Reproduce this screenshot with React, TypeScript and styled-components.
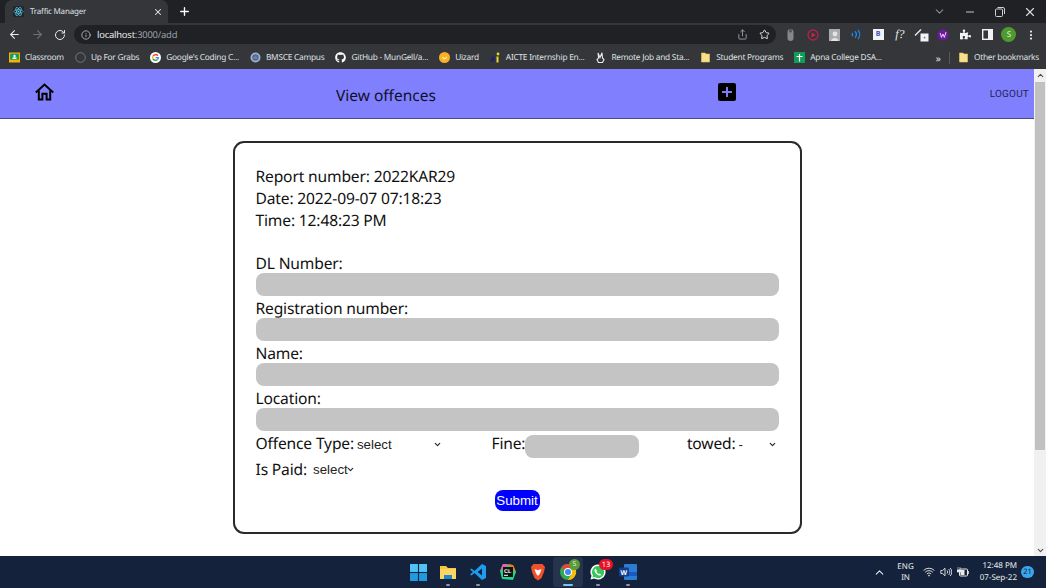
import { createGlobalStyle, styled } from 'styled-components';
import { FaGithub, FaPuzzlePiece } from 'react-icons/fa';
import { ArrowLeft, ArrowRight, ChevronDown, ChevronUp, Info, Minus, MoreVertical, Plus, RotateCw, Share, Star, X } from 'lucide-react';

const GlobalStyle = createGlobalStyle`
  html, body {
    margin: 0;
    height: 100%;
    overflow: hidden;
    background: #fff;
    font-family: 'Noto Sans', sans-serif;
  }
`;

const BOOKMARKS_LEFT = [
  { label: 'Classroom', icon: <ClassroomIcon /> },
  { label: 'Up For Grabs', icon: <RingIcon /> },
  { label: "Google's Coding C...", icon: <GoogleIcon /> },
  { label: 'BMSCE Campus', icon: <CampusIcon /> },
  { label: 'GitHub - MunGell/a...', icon: <FaGithub size={11} color="#fff" /> },
  { label: 'Uizard', icon: <UizardIcon /> },
  { label: 'AICTE Internship En...', icon: <AicteIcon /> },
  { label: 'Remote Job and Sta...', icon: <PeaceIcon /> },
  { label: 'Student Programs', icon: <FolderIcon /> },
  { label: 'Apna College DSA...', icon: <ApnaIcon /> },
];

function ClassroomIcon() {
  return (
    <svg width="11" height="11" viewBox="0 0 11 11">
      <rect width="11" height="10" y="0.5" fill="#f4b400" />
      <rect x="1.2" y="1.7" width="8.6" height="6" fill="#0f9d58" />
      <circle cx="5.5" cy="4" r="1.2" fill="#fff" />
      <rect x="3.5" y="5.4" width="4" height="1.6" fill="#fff" />
    </svg>
  );
}

function RingIcon() {
  return (
    <svg width="11" height="11" viewBox="0 0 11 11">
      <circle cx="5.5" cy="5.5" r="4.8" fill="none" stroke="#6f7a80" />
    </svg>
  );
}

function GoogleIcon() {
  return (
    <svg width="11" height="11" viewBox="0 0 11 11">
      <circle cx="5.5" cy="5.5" r="5.5" fill="#fff" />
      <path d="M8.4 3.3A3.6 3.6 0 0 0 2.4 3.7L3.6 4.6A2.2 2.2 0 0 1 7.3 4.2Z" fill="#ea4335" />
      <path d="M2.4 3.7A3.6 3.6 0 0 0 2.4 7.3L3.6 6.4A2.2 2.2 0 0 1 3.6 4.6Z" fill="#fbbc05" />
      <path d="M2.4 7.3A3.6 3.6 0 0 0 8 8L7 7A2.2 2.2 0 0 1 3.6 6.4Z" fill="#34a853" />
      <path d="M9 5H5.6V6.2H7.6A1.8 1.8 0 0 1 7 7L8 8A3.6 3.6 0 0 0 9 5Z" fill="#4285f4" />
    </svg>
  );
}

function CampusIcon() {
  return (
    <svg width="11" height="11" viewBox="0 0 11 11">
      <circle cx="5.5" cy="5.5" r="5" fill="#9fb2c4" />
      <circle cx="5.5" cy="5.5" r="3.2" fill="#3d6fb4" />
      <path d="M3 6.5 5.5 4 8 6.5Z" fill="#d0704a" />
    </svg>
  );
}

function UizardIcon() {
  return (
    <svg width="11" height="11" viewBox="0 0 11 11">
      <circle cx="5.5" cy="5.5" r="5.5" fill="#fbb124" />
      <path d="M3.7 5A1.8 1.8 0 0 0 7.3 5" fill="none" stroke="#fff" strokeWidth="1" />
    </svg>
  );
}

function AicteIcon() {
  return (
    <svg width="11" height="11" viewBox="0 0 11 11">
      <path d="M0 10 2.5 4.5H4L4.6 10H3.6L3.4 8.6H2L1.2 10Z" fill="#1c1c7a" />
      <rect x="6.5" y="4.5" width="2" height="6" fill="#e8d820" />
      <circle cx="8" cy="2" r="1.4" fill="#e8d820" />
    </svg>
  );
}

function PeaceIcon() {
  return (
    <svg width="11" height="11" viewBox="0 0 11 11">
      <path d="M3 1 5 5.5 7 .8 7.5 6 9 7.5 7.5 10.5H3.5L2 7.5 3.6 6Z" fill="none" stroke="#e8e8e8" strokeWidth="1.1" />
    </svg>
  );
}

function FolderIcon() {
  return (
    <svg width="11" height="11" viewBox="0 0 11 11">
      <path d="M1.5 1H5L6 2H9.5V10H1.5Z" fill="#f9df8c" stroke="#e8c95f" strokeWidth=".6" />
    </svg>
  );
}

function ApnaIcon() {
  return (
    <svg width="11" height="11" viewBox="0 0 11 11">
      <rect width="11" height="11" fill="#0f9d58" />
      <path d="M5.5 2V9.5M2.5 4.5H8.5" stroke="#fff" strokeWidth="1.2" />
    </svg>
  );
}

function WindowsLogo() {
  return (
    <svg width="17" height="17" viewBox="0 0 18 18">
      <rect width="8.4" height="8.4" fill="#4fc3f7" />
      <rect x="9.6" width="8.4" height="8.4" fill="#4fc3f7" />
      <rect y="9.6" width="8.4" height="8.4" fill="#1e9be0" />
      <rect x="9.6" y="9.6" width="8.4" height="8.4" fill="#1e9be0" />
    </svg>
  );
}

function FilesIcon() {
  return (
    <svg width="18" height="18" viewBox="0 0 18 18">
      <path d="M1 3H7L9 5H17V16H1Z" fill="#fcc63c" />
      <rect x="1" y="6" width="16" height="10" fill="#fbd566" />
      <rect x="5" y="12" width="8" height="4" fill="#1e88c9" />
    </svg>
  );
}

function VsCodeIcon() {
  return (
    <svg width="18" height="18" viewBox="0 0 18 18">
      <path d="M13 1 17 3V15L13 17 5.5 10 2.5 12.5 1 11.5 4 9 1 6.5 2.5 5.5 5.5 8ZM13 5.5 8.5 9 13 12.5Z" fill="#1f9cf0" />
    </svg>
  );
}

function ClionIcon() {
  return (
    <svg width="18" height="18" viewBox="0 0 18 18">
      <path d="M4 1 14 2 17 9 14 17 3 16 1 8Z" fill="#21d789" />
      <path d="M9 1 14 2 17 9 11 5Z" fill="#f97a12" />
      <path d="M4 1 9 1 5 6 1 8Z" fill="#ef5fa7" />
      <rect x="4" y="4" width="10" height="10" fill="#111" />
      <text x="5" y="10" fontSize="5.5" fontWeight="700" fontFamily="Liberation Sans" fill="#fff">CL</text>
      <rect x="5" y="11.8" width="4" height="1" fill="#fff" />
    </svg>
  );
}

function BraveIcon() {
  return (
    <svg width="18" height="18" viewBox="0 0 18 18">
      <path d="M4.5 1H13.5L16 4 15 9 12.5 15 9 17.5 5.5 15 3 9 2 4Z" fill="#f0512b" />
      <path d="M5.5 6 9 7.2 12.5 6 11 10.5 9 13 7 10.5Z" fill="#fff" />
    </svg>
  );
}

function ChromeIcon() {
  return (
    <svg width="18" height="18" viewBox="0 0 18 18">
      <circle cx="9" cy="9" r="8" fill="#34a853" />
      <path d="M9 1A8 8 0 0 1 16 5H9A4 4 0 0 0 5.5 7L2.5 4.2A8 8 0 0 1 9 1Z" fill="#ea4335" />
      <path d="M16 5A8 8 0 0 1 9 17L12.5 11 12.6 7Z" fill="#fbbc05" />
      <circle cx="9" cy="9" r="4" fill="#fff" />
      <circle cx="9" cy="9" r="3" fill="#4285f4" />
    </svg>
  );
}

function WhatsappIcon() {
  return (
    <svg width="18" height="18" viewBox="0 0 18 18">
      <path d="M9 1.5A7.5 7.5 0 0 0 2.5 12.8L1.5 16.5 5.3 15.5A7.5 7.5 0 1 0 9 1.5Z" fill="#fff" />
      <path d="M9 3A6 6 0 0 0 4 12.3L3.4 14.6 5.8 14A6 6 0 1 0 9 3Z" fill="#35c759" />
      <path d="M6.5 5.5 8 8 7.4 9 9.4 11 10.4 10.4 12.6 12C11 13.6 5 11 5.6 6.4Z" fill="#fff" />
    </svg>
  );
}

function WordIcon() {
  return (
    <svg width="18" height="18" viewBox="0 0 18 18">
      <rect x="5" y="1" width="13" height="16" rx="1" fill="#2b7cd3" />
      <rect x="5" y="9" width="13" height="4" fill="#185abd" />
      <rect y="4.5" width="10" height="9" rx="1" fill="#103f91" />
      <text x="1.5" y="11.5" fontSize="7" fontWeight="700" fontFamily="Liberation Sans" fill="#fff">W</text>
    </svg>
  );
}

function ReactFavicon() {
  return (
    <svg width="11" height="11" viewBox="0 0 11 11" fill="none" stroke="#61dafb" strokeWidth=".6">
      <rect width="11" height="11" rx="1.5" fill="#20272b" stroke="none" />
      <ellipse cx="5.5" cy="5.5" rx="4.6" ry="1.8" />
      <ellipse cx="5.5" cy="5.5" rx="4.6" ry="1.8" transform="rotate(60 5.5 5.5)" />
      <ellipse cx="5.5" cy="5.5" rx="4.6" ry="1.8" transform="rotate(120 5.5 5.5)" />
      <circle cx="5.5" cy="5.5" r=".8" fill="#61dafb" stroke="none" />
    </svg>
  );
}

function HomeIcon() {
  return (
    <svg width="19" height="18" viewBox="0 0 19 18" fill="none" stroke="#000" strokeWidth="2">
      <path d="M.8 9.6 9.5 1.6 18.2 9.6" />
      <path d="M3.8 7.6V16.6H7.4V10.8H11.6V16.6H15.2V7.6" />
    </svg>
  );
}

function AddSquareIcon() {
  return (
    <svg width="18" height="18" viewBox="0 0 18 18">
      <rect width="18" height="18" rx="2" fill="#000" />
      <path d="M9 4V14M4 9H14" stroke="#7c7cf5" strokeWidth="2" />
    </svg>
  );
}

function MicExtIcon() {
  return (
    <svg width="11" height="14" viewBox="0 0 11 14">
      <rect x="2.5" y="1" width="6" height="12" rx="3" fill="#85888b" />
      <rect x="3.8" y="1" width="3.4" height="3.5" rx="1.5" fill="#55575a" />
    </svg>
  );
}

function PlayExtIcon() {
  return (
    <svg width="12" height="12" viewBox="0 0 12 12">
      <circle cx="6" cy="6" r="5" fill="none" stroke="#b3224b" strokeWidth="1.3" />
      <path d="M4.6 3.4 8.6 6 4.6 8.6Z" fill="#c8264f" />
    </svg>
  );
}

function PhotoExtIcon() {
  return (
    <svg width="11" height="12" viewBox="0 0 11 12">
      <rect width="11" height="12" fill="#a9abad" />
      <circle cx="6" cy="5" r="2.4" fill="#e4e4e4" />
      <path d="M2 12C2.5 8 9 8 9.5 12Z" fill="#e4e4e4" />
    </svg>
  );
}

function SignalExtIcon() {
  return (
    <svg width="10" height="11" viewBox="0 0 10 11" fill="none" stroke="#1e88e5" strokeWidth="1.3">
      <path d="M1 3.8A3 3 0 0 1 1 7.2M4 2.2A5 5 0 0 1 4 8.8M7 .8A7.5 7.5 0 0 1 7 10.2" />
    </svg>
  );
}

function PencilExtIcon() {
  return (
    <svg width="15" height="15" viewBox="0 0 15 15">
      <path d="M1 8.5 7 2.5" stroke="#e8eaed" strokeWidth="1.5" />
      <rect x="6.5" y="6.5" width="8" height="8" fill="#f1f3f4" />
      <rect x="9.8" y="9.8" width="1.6" height="1.6" fill="#70757a" />
    </svg>
  );
}

function WriterExtIcon() {
  return (
    <svg width="12" height="12" viewBox="0 0 12 12">
      <circle cx="6" cy="6" r="5.6" fill="#6a1b9a" />
      <path d="M3.2 4 4.5 8.4 6 5 7.4 8.4 9 3" fill="none" stroke="#f3e5f5" strokeWidth=".9" />
    </svg>
  );
}

function RestoreGlyph() {
  return (
    <svg width="10" height="10" viewBox="0 0 10 10" fill="none" stroke="#d0d0d0">
      <rect x=".5" y="2" width="7" height="7.5" rx="1" />
      <path d="M2.5 .5H8A1.5 1.5 0 0 1 9.5 2V7" />
    </svg>
  );
}

function SidePanelGlyph() {
  return (
    <svg width="11" height="11" viewBox="0 0 11 11">
      <rect x=".7" y=".7" width="9.6" height="9.6" fill="none" stroke="#f1f3f4" strokeWidth="1.4" />
      <rect x="6" y="1" width="4" height="9" fill="#f1f3f4" />
    </svg>
  );
}

function WifiGlyph() {
  return (
    <svg width="12" height="10" viewBox="0 0 12 10" fill="none" stroke="#e8e8e8" strokeWidth=".9">
      <path d="M.6 3.4A7.8 7.8 0 0 1 11.4 3.4M2.2 5.2A5.4 5.4 0 0 1 9.8 5.2M3.9 6.9A3 3 0 0 1 8.1 6.9" />
      <circle cx="6" cy="8.6" r=".8" fill="#e8e8e8" stroke="none" />
    </svg>
  );
}

function SpeakerGlyph() {
  return (
    <svg width="12" height="10" viewBox="0 0 12 10" fill="none" stroke="#e8e8e8" strokeWidth=".9">
      <path d="M.8 3.5H2.6L5 1.2V8.8L2.6 6.5H.8Z" />
      <path d="M7 3.4A2.2 2.2 0 0 1 7 6.6M8.6 2A4.2 4.2 0 0 1 8.6 8M10.2 1A5.8 5.8 0 0 1 10.2 9" />
    </svg>
  );
}

function BatteryGlyph() {
  return (
    <svg width="12" height="10" viewBox="0 0 12 10">
      <rect x="2.5" y="2" width="8" height="7" rx="1" fill="none" stroke="#e8e8e8" />
      <rect x="3.5" y="3" width="4" height="5" fill="#e8e8e8" />
      <rect x="10.8" y="4" width="1" height="3" fill="#e8e8e8" />
      <path d="M1 0V3M3 0V3M0 3H4V5H0Z" fill="#e8e8e8" stroke="#e8e8e8" strokeWidth=".6" />
    </svg>
  );
}

function SelectField({ width, value }: { width: number; value: string }) {
  return (
    <SelectWrap>
      <Select $width={width}>
        <option>{value}</option>
      </Select>
      <SelectChevron>
        <ChevronDown size={9} color="#222" strokeWidth={3} />
      </SelectChevron>
    </SelectWrap>
  );
}

export default function App() {
  return (
    <>
      <GlobalStyle />
      <Screen>
        <TabStrip>
          <Tab>
            <ReactFavicon />
            <TabTitle>Traffic Manager</TabTitle>
            <X size={10} color="#e8eaed" strokeWidth={2.5} />
          </Tab>
          <NewTab>
            <Plus size={13} color="#fff" strokeWidth={2.5} />
          </NewTab>
          <WindowControls>
            <ChevronDown size={13} color="#8a8d91" />
            <Minus size={12} color="#c8c8c8" />
            <RestoreGlyph />
            <X size={14} color="#d8d8d8" />
          </WindowControls>
        </TabStrip>

        <Toolbar>
          <NavButtons>
            <ArrowLeft size={13} color="#e8eaed" strokeWidth={2} />
            <ArrowRight size={13} color="#6f7276" strokeWidth={2} />
            <RotateCw size={12} color="#e8eaed" strokeWidth={2} />
          </NavButtons>
          <AddressBar>
            <Info size={10} color="#bdc1c6" />
            <Url>
              localhost<UrlRest>:3000/add</UrlRest>
            </Url>
            <AddressActions>
              <Share size={11} color="#9aa0a6" />
              <Star size={11} color="#e8eaed" strokeWidth={2} />
            </AddressActions>
          </AddressBar>
          <Extensions>
            <ExtSlot><MicExtIcon /></ExtSlot>
            <ExtSlot><PlayExtIcon /></ExtSlot>
            <ExtSlot><PhotoExtIcon /></ExtSlot>
            <ExtSlot><SignalExtIcon /></ExtSlot>
            <ExtSlot><ExtPage>B</ExtPage></ExtSlot>
            <ExtSlot><ExtItalic>f?</ExtItalic></ExtSlot>
            <ExtSlot><PencilExtIcon /></ExtSlot>
            <ExtSlot><WriterExtIcon /></ExtSlot>
            <ExtSlot><FaPuzzlePiece size={11} color="#f1f3f4" /></ExtSlot>
            <ExtSlot><SidePanelGlyph /></ExtSlot>
            <ExtSlot><Avatar>S</Avatar></ExtSlot>
            <ExtSlot><MoreVertical size={12} color="#e8eaed" strokeWidth={2.5} /></ExtSlot>
          </Extensions>
        </Toolbar>

        <BookmarksBar>
          {BOOKMARKS_LEFT.map((b) => (
            <Bookmark key={b.label}>
              {b.icon}
              <span>{b.label}</span>
            </Bookmark>
          ))}
          <BookmarksEnd>
            <Overflow>»</Overflow>
            <BarDivider />
            <Bookmark>
              <FolderIcon />
              <span>Other bookmarks</span>
            </Bookmark>
          </BookmarksEnd>
        </BookmarksBar>

        <Viewport>
          <Page>
            <Nav>
              <NavLeft>
                <NavIconLink><HomeIcon /></NavIconLink>
                <NavTitle>View offences</NavTitle>
                <NavIconLink><AddSquareIcon /></NavIconLink>
              </NavLeft>
              <Logout>LOGOUT</Logout>
            </Nav>
            <Main>
              <Card>
                <InfoBlock>
                  <div>Report number: 2022KAR29</div>
                  <div>Date: 2022-09-07 07:18:23</div>
                  <div>Time: 12:48:23 PM</div>
                </InfoBlock>
                <Label>DL Number:</Label>
                <TextInput />
                <Label>Registration number:</Label>
                <TextInput />
                <Label>Name:</Label>
                <TextInput />
                <Label>Location:</Label>
                <TextInput />
                <FieldRow>
                  <FieldGroup>
                    <RowLabel>Offence Type:</RowLabel>
                    <SelectField width={87} value="select" />
                  </FieldGroup>
                  <FieldGroup>
                    <RowLabel>Fine:</RowLabel>
                    <FineInput />
                  </FieldGroup>
                  <FieldGroup>
                    <RowLabel>towed:</RowLabel>
                    <SelectField width={40} value="-" />
                  </FieldGroup>
                </FieldRow>
                <PaidRow>
                  <Label>Is Paid:</Label>
                  <SelectField width={44} value="select" />
                </PaidRow>
                <SubmitRow>
                  <SubmitButton type="button">Submit</SubmitButton>
                </SubmitRow>
              </Card>
            </Main>
          </Page>
          <Scrollbar>
            <ScrollArrow><ChevronUp size={9} color="#505050" strokeWidth={3} /></ScrollArrow>
            <ScrollTrack>
              <ScrollThumb />
            </ScrollTrack>
            <ScrollArrow><ChevronDown size={9} color="#505050" strokeWidth={3} /></ScrollArrow>
          </Scrollbar>
        </Viewport>

        <Taskbar>
          <span />
          <TaskIcons>
            <TaskIcon><WindowsLogo /></TaskIcon>
            <TaskIcon $open><FilesIcon /></TaskIcon>
            <TaskIcon $open><VsCodeIcon /></TaskIcon>
            <TaskIcon><ClionIcon /></TaskIcon>
            <TaskIcon><BraveIcon /></TaskIcon>
            <TaskIcon $active>
              <ChromeIcon />
              <ProfileBadge>S</ProfileBadge>
            </TaskIcon>
            <TaskIcon $open>
              <WhatsappIcon />
              <CountBadge>13</CountBadge>
            </TaskIcon>
            <TaskIcon $open><WordIcon /></TaskIcon>
          </TaskIcons>
          <Tray>
            <ChevronUp size={13} color="#e8e8e8" />
            <TrayLang>
              <span>ENG</span>
              <span>IN</span>
            </TrayLang>
            <TrayGlyphs>
              <WifiGlyph />
              <SpeakerGlyph />
              <BatteryGlyph />
            </TrayGlyphs>
            <Clock>
              <span>12:48 PM</span>
              <span>07-Sep-22</span>
            </Clock>
            <NotifyBadge>21</NotifyBadge>
          </Tray>
        </Taskbar>
      </Screen>
    </>
  );
}

const Screen = styled.div`
  width: 1046px;
  height: 588px;
  display: flex;
  flex-direction: column;
  overflow: hidden;
  text-rendering: geometricPrecision;
`;

const TabStrip = styled.div`
  height: 23px;
  flex: none;
  display: flex;
  align-items: flex-end;
  padding-left: 5px;
  background: #202124;
`;

const Tab = styled.div`
  width: 163px;
  height: 23px;
  box-sizing: border-box;
  display: flex;
  align-items: center;
  gap: 6px;
  padding: 0 5px 0 8px;
  background: #35363a;
  border-radius: 7px 7px 0 0;
`;

const TabTitle = styled.span`
  flex: 1;
  font-size: 8px;
  letter-spacing: -0.2px;
  color: #dfe1e5;
  white-space: nowrap;
`;

const NewTab = styled.div`
  width: 16px;
  height: 23px;
  margin-left: 8px;
  display: flex;
  align-items: center;
  justify-content: center;
`;

const WindowControls = styled.div`
  margin-left: auto;
  width: 116px;
  height: 23px;
  box-sizing: border-box;
  padding: 0 9px 0 3px;
  display: flex;
  align-items: center;
  justify-content: space-between;
`;

const Toolbar = styled.div`
  height: 23px;
  flex: none;
  display: flex;
  align-items: center;
  background: #35363a;
`;

const NavButtons = styled.div`
  width: 74px;
  box-sizing: border-box;
  padding: 0 8px;
  display: flex;
  justify-content: space-between;
  align-items: center;
`;

const AddressBar = styled.div`
  width: 702px;
  height: 19px;
  box-sizing: border-box;
  padding: 0 6px 0 7px;
  display: flex;
  align-items: center;
  gap: 6px;
  background: #202124;
  border-radius: 10px;
`;

const Url = styled.span`
  font-size: 9.4px;
  letter-spacing: -0.2px;
  color: #e8eaed;
`;

const UrlRest = styled.span`
  color: #9aa0a6;
`;

const AddressActions = styled.div`
  margin-left: auto;
  display: flex;
  align-items: center;
  gap: 11px;
`;

const Extensions = styled.div`
  flex: 1;
  padding-left: 4px;
  display: flex;
  align-items: center;
`;

const ExtSlot = styled.div`
  width: 21.8px;
  flex: none;
  display: flex;
  align-items: center;
  justify-content: center;
`;

const ExtPage = styled.span`
  width: 11px;
  height: 11px;
  display: flex;
  align-items: center;
  justify-content: center;
  background: #f1f3f4;
  font-size: 7px;
  font-weight: 700;
  color: #3f51b5;
`;

const ExtItalic = styled.span`
  font-family: 'Liberation Serif', serif;
  font-style: italic;
  font-size: 12px;
  color: #e8eaed;
`;

const Avatar = styled.span`
  width: 15px;
  height: 15px;
  border-radius: 50%;
  display: flex;
  align-items: center;
  justify-content: center;
  background: #4f9a2c;
  font-size: 8px;
  color: #e8f5e0;
`;

const BookmarksBar = styled.div`
  height: 23px;
  flex: none;
  box-sizing: border-box;
  padding: 0 7px 0 9px;
  display: flex;
  align-items: center;
  gap: 11px;
  background: #35363a;
`;

const Bookmark = styled.div`
  display: flex;
  align-items: center;
  gap: 5px;
  font-size: 8.3px;
  letter-spacing: -0.24px;
  color: #dfe1e5;
  white-space: nowrap;
`;

const BookmarksEnd = styled.div`
  margin-left: auto;
  display: flex;
  align-items: center;
  gap: 8px;
`;

const Overflow = styled.span`
  font-size: 10px;
  color: #dfe1e5;
`;

const BarDivider = styled.span`
  width: 1px;
  height: 12px;
  background: #55575b;
`;

const Viewport = styled.div`
  flex: 1;
  min-height: 0;
  display: flex;
`;

const Page = styled.div`
  flex: 1;
  min-width: 0;
  display: flex;
  flex-direction: column;
  background: #fff;
`;

const Nav = styled.nav`
  height: 50px;
  flex: none;
  box-sizing: border-box;
  padding: 0 5px 0 35px;
  display: flex;
  align-items: center;
  background: #8080ff;
  border-bottom: 1px solid #4a4a8c;
`;

const NavLeft = styled.div`
  display: flex;
  align-items: center;
  gap: 282px;
`;

const NavIconLink = styled.a`
  display: flex;
  margin-top: -4px;
`;

const NavTitle = styled.h1`
  margin: 3px 0 0;
  width: 100px;
  font-size: 15.5px;
  font-weight: 400;
  color: #10102a;
  white-space: nowrap;
`;

const Logout = styled.span`
  margin: 1px 0 0 auto;
  font-family: Roboto, sans-serif;
  font-size: 10px;
  letter-spacing: 0.2px;
  color: #23234f;
`;

const Main = styled.main`
  flex: 1;
  display: flex;
  justify-content: center;
  padding-top: 22px;
`;

const Card = styled.form`
  width: 569px;
  height: 393px;
  box-sizing: border-box;
  padding: 22px 21px 0;
  border: 2px solid #2a2a2a;
  border-radius: 11px;
  display: flex;
  flex-direction: column;
`;

const InfoBlock = styled.div`
  margin-bottom: 21px;
  font-size: 15.6px;
  letter-spacing: -0.16px;
  line-height: 22px;
  color: #111;
`;

const Label = styled.label`
  font-size: 15.6px;
  letter-spacing: -0.16px;
  line-height: 22px;
  color: #111;
  white-space: nowrap;
`;

const RowLabel = styled(Label)`
  margin-top: -3px;
`;

const TextInput = styled.input`
  height: 23px;
  flex: none;
  box-sizing: border-box;
  margin: -1px 0 1px;
  border: none;
  border-radius: 8px;
  background: #c4c4c4;
`;

const FieldRow = styled.div`
  margin-top: 3px;
  display: flex;
  justify-content: space-between;
`;

const FieldGroup = styled.div`
  display: flex;
  align-items: flex-start;
  height: 23px;
`;

const FineInput = styled(TextInput)`
  width: 114px;
  margin: 0;
`;

const SelectWrap = styled.div`
  position: relative;
  display: flex;
  margin-left: 3px;
`;

const Select = styled.select<{ $width: number }>`
  width: ${({ $width }) => $width}px;
  height: 18px;
  padding: 0;
  border: none;
  appearance: none;
  background: transparent;
  font-family: 'Liberation Sans', sans-serif;
  font-size: 13.3px;
  color: #222;
`;

const SelectChevron = styled.span`
  position: absolute;
  right: 2px;
  top: 5px;
  display: flex;
  pointer-events: none;
`;

const PaidRow = styled.div`
  height: 22px;
  display: flex;
  align-items: center;
  gap: 3px;
`;

const SubmitRow = styled.div`
  margin-top: 10px;
  display: flex;
  justify-content: center;
`;

const SubmitButton = styled.button`
  width: 45px;
  height: 21px;
  padding: 0;
  border: none;
  border-radius: 8px;
  background: #0000ff;
  font-family: 'Liberation Sans', sans-serif;
  font-size: 13.3px;
  color: #fff;
`;

const Scrollbar = styled.div`
  width: 12px;
  flex: none;
  display: flex;
  flex-direction: column;
  background: #f1f1f1;
`;

const ScrollArrow = styled.div`
  height: 12px;
  display: flex;
  align-items: center;
  justify-content: center;
`;

const ScrollTrack = styled.div`
  flex: 1;
  padding: 1px 1px 0;
`;

const ScrollThumb = styled.div`
  height: 368px;
  background: #c1c1c1;
`;

const Taskbar = styled.footer`
  height: 32px;
  flex: none;
  display: grid;
  grid-template-columns: 1fr auto 1fr;
  align-items: center;
  background: #14233b;
`;

const TaskIcons = styled.div`
  display: flex;
`;

const TaskIcon = styled.div<{ $active?: boolean; $open?: boolean }>`
  position: relative;
  width: 30px;
  height: 30px;
  display: flex;
  align-items: center;
  justify-content: center;
  border-radius: 3px;
  background: ${({ $active }) => ($active ? '#25344b' : 'transparent')};

  &::after {
    content: '';
    display: ${({ $active, $open }) => ($active || $open ? 'block' : 'none')};
    position: absolute;
    bottom: 1px;
    left: 50%;
    width: ${({ $active }) => ($active ? 10 : 4)}px;
    height: 2px;
    transform: translateX(-50%);
    border-radius: 1px;
    background: ${({ $active }) => ($active ? '#7cc4f0' : '#8d96a3')};
  }
`;

const ProfileBadge = styled.span`
  position: absolute;
  top: 2px;
  right: 3px;
  width: 11px;
  height: 11px;
  display: flex;
  align-items: center;
  justify-content: center;
  border-radius: 50%;
  background: #5d9a3a;
  font-size: 7px;
  color: #dff0d0;
`;

const CountBadge = styled.span`
  position: absolute;
  top: 2px;
  right: 0;
  width: 14px;
  height: 11px;
  display: flex;
  align-items: center;
  justify-content: center;
  border-radius: 6px;
  background: #e81123;
  font-size: 7.5px;
  color: #fff;
`;

const Tray = styled.div`
  justify-self: end;
  display: flex;
  align-items: center;
  padding-right: 12px;
`;

const TrayLang = styled.div`
  margin-left: 11px;
  display: flex;
  flex-direction: column;
  align-items: center;
  font-size: 8px;
  line-height: 11px;
  color: #eee;
`;

const TrayGlyphs = styled.div`
  margin-left: 9px;
  display: flex;
  align-items: center;
  gap: 5px;
`;

const Clock = styled.div`
  margin-left: 11px;
  display: flex;
  flex-direction: column;
  align-items: flex-end;
  font-size: 8px;
  line-height: 12px;
  color: #eee;
`;

const NotifyBadge = styled.span`
  margin-left: 4px;
  width: 13px;
  height: 12px;
  display: flex;
  align-items: center;
  justify-content: center;
  border-radius: 6px;
  background: #3aa6ee;
  font-size: 7.5px;
  color: #0c1c30;
`;
